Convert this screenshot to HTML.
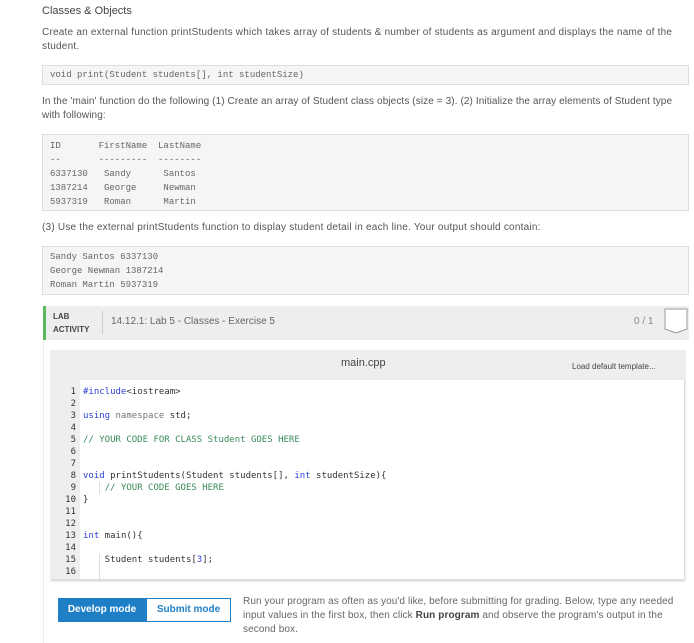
<!DOCTYPE html>
<html><head><style>
*{margin:0;padding:0;box-sizing:border-box}
body{width:694px;height:643px;background:#fff;font-family:"Liberation Sans",sans-serif;color:#555;position:relative;overflow:hidden}
.a{position:absolute}
.t{font-size:10px;line-height:14px;color:#555;left:42px;width:647px;letter-spacing:0.22px}
.box{position:absolute;left:42px;width:647px;background:#f5f5f5;border:1px solid #ddd;font-family:"Liberation Mono",monospace;font-size:9px;color:#666;line-height:14px;padding:0 7px;white-space:pre}
.code{font-family:"DejaVu Sans Mono",monospace;font-size:9px;line-height:12px;white-space:pre;color:#333}
.k{color:#2b3fd6}.c{color:#3a8a5a}.n{color:#777}
</style></head><body>
<div class="a t" style="top:4px;font-size:11px;color:#444;letter-spacing:0">Classes &amp; Objects</div>
<div class="a t" style="top:26px">Create an external function printStudents which takes array of students &amp; number of students as argument and displays the name of the student.</div>
<div class="box" style="top:65px;height:20px;line-height:18px">void print(Student students[], int studentSize)</div>
<div class="a t" style="top:95px;letter-spacing:0.1px;width:649px">In the 'main' function do the following (1) Create an array of Student class objects (size = 3). (2) Initialize the array elements of Student type with following:</div>
<div class="box" style="top:134px;height:77px;padding-top:4px">ID       FirstName  LastName
--       ---------  --------
6337130   Sandy      Santos
1387214   George     Newman
5937319   Roman      Martin</div>
<div class="a t" style="top:221px">(3) Use the external printStudents function to display student detail in each line. Your output should contain:</div>
<div class="box" style="top:246px;height:49px;padding-top:3px">Sandy Santos 6337130
George Newman 1387214
Roman Martin 5937319</div>
<div class="a" style="left:43px;top:306px;width:646px;height:34px;background:#eee;border-left:3px solid #5cb85c"></div>
<div class="a" style="left:53px;top:310px;font-size:8px;font-weight:bold;color:#444;line-height:13px">LAB<br>ACTIVITY</div>
<div class="a" style="left:102px;top:311px;width:1px;height:23px;background:#ccc"></div>
<div class="a" style="left:111px;top:316px;font-size:10px;color:#666">14.12.1: Lab 5 - Classes - Exercise 5</div>
<div class="a" style="left:634px;top:316px;font-size:10px;color:#888">0 / 1</div>
<svg class="a" style="left:664px;top:308px" width="25" height="26"><path d="M1 1H23V21L12 25L1 21Z" fill="#fff" stroke="#999" stroke-width="1"/></svg>
<div class="a" style="left:43px;top:340px;width:646px;height:303px;border-left:1px solid #eee"></div>
<div class="a" style="left:51px;top:350px;width:634px;height:230px;border:1px solid #ddd;box-shadow:0 1px 2px #ccc"></div>
<div class="a" style="left:51px;top:350px;width:634px;height:30px;background:#eee"></div>
<div class="a" style="left:341px;top:357px;font-size:11px;color:#444">main.cpp</div>
<div class="a" style="left:572px;top:362px;font-size:8px;color:#444">Load default template...</div>
<div class="a" style="left:51px;top:380px;width:29px;height:199px;background:#eee"></div>
<div class="a code" style="left:51px;top:386px;width:25px;text-align:right;color:#333">1
2
3
4
5
6
7
8
9
10
11
12
13
14
15
16</div>
<div class="a" style="left:99px;top:482px;width:1px;height:12px;background:#ddd"></div>
<div class="a" style="left:99px;top:554px;width:1px;height:25px;background:#ddd"></div>
<div class="a code" style="left:83px;top:386px"><span class="k">#include</span>&lt;iostream&gt;

<span class="k">using</span> <span class="n">namespace</span> std;

<span class="c">// YOUR CODE FOR CLASS Student GOES HERE</span>


<span class="k">void</span> printStudents(Student students[], <span class="k">int</span> studentSize){
    <span class="c">// YOUR CODE GOES HERE</span>
}


<span class="k">int</span> main(){

    Student students[<span class="k">3</span>];
</div>
<div class="a" style="left:58px;top:598px;width:88px;height:24px;background:#1e7fc6;color:#fff;font-size:10px;font-weight:bold;text-align:center;line-height:24px">Develop mode</div>
<div class="a" style="left:146px;top:598px;width:85px;height:24px;border:1px solid #1e7fc6;color:#1e7fc6;font-size:10px;font-weight:bold;text-align:center;line-height:22px">Submit mode</div>
<div class="a" style="left:243px;top:595px;width:445px;font-size:10px;line-height:14px;color:#666;letter-spacing:0.1px">Run your program as often as you'd like, before submitting for grading. Below, type any needed input values in the first box, then click <b style="color:#444">Run program</b> and observe the program's output in the second box.</div>
</body></html>
